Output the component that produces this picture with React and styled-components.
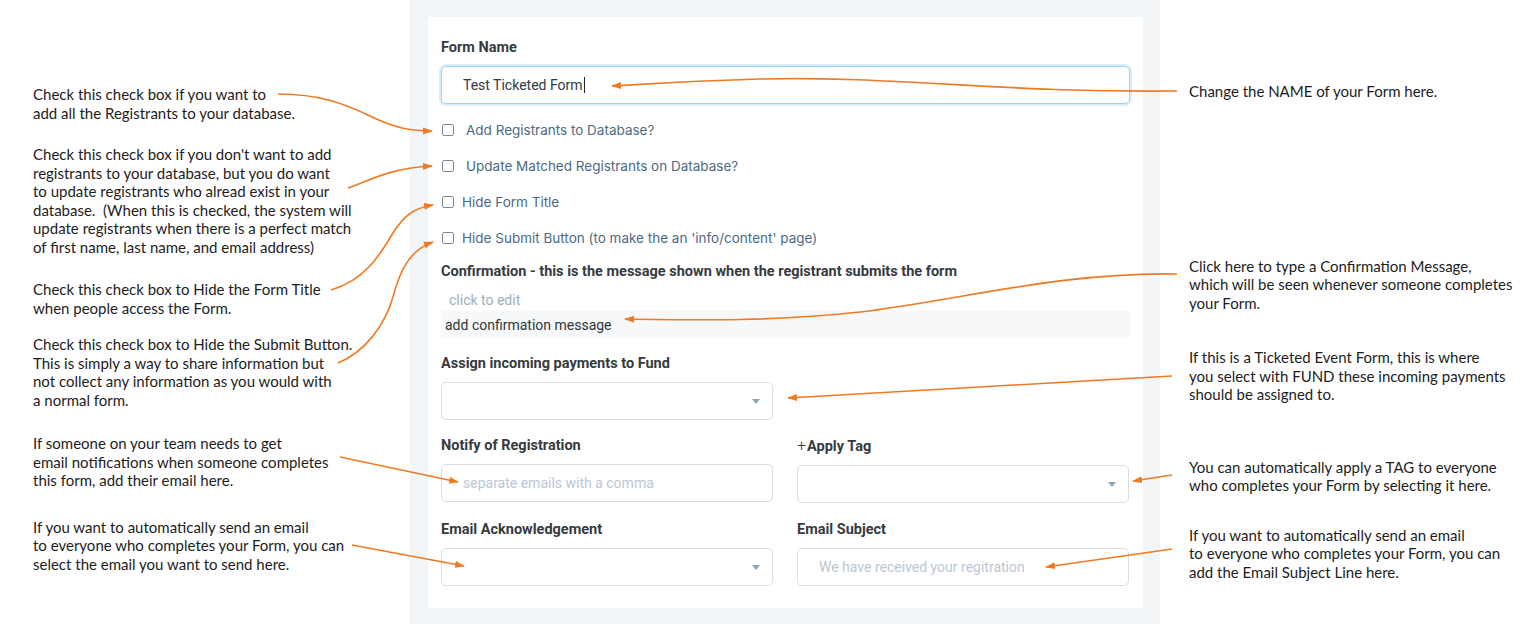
import React from 'react';
import styled, { createGlobalStyle } from 'styled-components';

const GlobalStyle = createGlobalStyle`
  html, body {
    margin: 0;
    padding: 0;
    background: #ffffff;
  }
  body {
    width: 1536px;
    height: 624px;
    overflow: hidden;
  }
`;

const Page = styled.div`
  position: relative;
  display: flex;
  width: 1536px;
  height: 624px;
  font-family: Lato, "Liberation Sans", sans-serif;
`;

const NoteColumn = styled.div`
  flex: none;
  display: flex;
  flex-direction: column;
  width: ${p => p.$width}px;
  padding-left: ${p => p.$inset}px;
  box-sizing: border-box;
`;

const Note = styled.p`
  margin: ${p => p.$top}px 0 0;
  font-size: 15px;
  line-height: 18.5px;
  color: #1d1d1d;
  white-space: pre;
`;

const Panel = styled.div`
  flex: none;
  width: 750px;
  height: 624px;
  padding: 17px 17px 16px 18px;
  box-sizing: border-box;
  background: #f3f6f9;
`;

const Card = styled.div`
  height: 100%;
  padding: 23px 13px 0;
  box-sizing: border-box;
  background: #ffffff;
  font-family: Roboto, "Liberation Sans", sans-serif;
`;

const Label = styled.div`
  margin-top: ${p => p.$top || 0}px;
  font-size: 14.5px;
  font-weight: 700;
  line-height: 16px;
  color: #363b40;

  .plus {
    font-weight: 300;
    font-size: 16px;
    margin-right: 1px;
  }
`;

const Field = styled.div`
  display: flex;
  align-items: center;
  height: 38px;
  margin-top: 10px;
  padding: 0 12px 0 21px;
  box-sizing: border-box;
  border: 1px solid ${p => (p.$focused ? '#9fd1f3' : '#d3dee7')};
  border-radius: 5px;
  box-shadow: ${p => (p.$focused ? '0 0 0 2px #dbeefc' : 'none')};
  font-size: 14px;
  color: ${p => (p.$placeholder ? '#b9c8d4' : '#333a40')};
`;

const Cursor = styled.span`
  display: inline-block;
  width: 1px;
  height: 16px;
  margin-left: 1px;
  background: #222;
`;

const Caret = styled.span`
  margin-left: auto;
  width: 0;
  height: 0;
  border-left: 4px solid transparent;
  border-right: 4px solid transparent;
  border-top: 5px solid #8ea4b6;
`;

const CheckList = styled.div`
  display: flex;
  flex-direction: column;
  margin-top: 8px;
`;

const CheckRow = styled.label`
  display: flex;
  align-items: center;
  height: 36px;
  padding-left: 1px;
  font-family: Inter, "Liberation Sans", sans-serif;
  font-size: 13.5px;
  color: #4d6a82;
`;

const Box = styled.span`
  flex: none;
  width: 12px;
  height: 12px;
  margin-right: ${p => p.$gap}px;
  box-sizing: border-box;
  border: 1.5px solid #7e8a95;
  border-radius: 2px;
`;

const Hint = styled.div`
  margin-top: 12px;
  padding-left: 8px;
  font-size: 14px;
  line-height: 16px;
  color: #9db0bf;
`;

const Message = styled.div`
  display: flex;
  align-items: center;
  height: 27px;
  margin-top: 3px;
  padding-left: 4px;
  background: #f6f8fa;
  font-size: 14px;
  color: #30363b;
`;

const Half = styled.div`
  width: 332px;
`;

const Row = styled.div`
  display: grid;
  grid-template-columns: 332px 332px;
  column-gap: 24px;
  margin-top: ${p => p.$top}px;
`;

const Arrows = styled.svg`
  position: absolute;
  left: 0;
  top: 0;
  pointer-events: none;
`;

const leftNotes = [
  { top: 85, lines: ['Check this check box if you want to', 'add all the Registrants to your database.'] },
  {
    top: 23,
    lines: [
      "Check this check box if you don't want to add",
      'registrants to your database, but you do want',
      'to update registrants who alread exist in your',
      'database.  (When this is checked, the system will',
      'update registrants when there is a perfect match',
      'of first name, last name, and email address)',
    ],
  },
  { top: 24, lines: ['Check this check box to Hide the Form Title', 'when people access the Form.'] },
  {
    top: 18,
    lines: [
      'Check this check box to Hide the Submit Button.',
      'This is simply a way to share information but',
      'not collect any information as you would with',
      'a normal form.',
    ],
  },
  {
    top: 25,
    lines: ['If someone on your team needs to get', 'email notifications when someone completes', 'this form, add their email here.'],
  },
  {
    top: 28,
    lines: ['If you want to automatically send an email', 'to everyone who completes your Form, you can', 'select the email you want to send here.'],
  },
];

const rightNotes = [
  { top: 82, lines: ['Change the NAME of your Form here.'] },
  {
    top: 156,
    lines: ['Click here to type a Confirmation Message,', 'which will be seen whenever someone completes', 'your Form.'],
  },
  {
    top: 36,
    lines: ['If this is a Ticketed Event Form, this is where', 'you select with FUND these incoming payments', 'should be assigned to.'],
  },
  { top: 54, lines: ['You can automatically apply a TAG to everyone', 'who completes your Form by selecting it here.'] },
  {
    top: 31,
    lines: ['If you want to automatically send an email', 'to everyone who completes your Form, you can', 'add the Email Subject Line here.'],
  },
];

const checks = [
  { label: 'Add Registrants to Database?', gap: 12 },
  { label: 'Update Matched Registrants on Database?', gap: 12 },
  { label: 'Hide Form Title', gap: 8 },
  { label: "Hide Submit Button (to make the an 'info/content' page)", gap: 8 },
];

// leader lines from each note to the control it describes
const leaders = [
  'M278,94 C320,94 345,104 370,116 C395,128 410,131 432,131',
  'M348,188 C375,178 392,168 432,166',
  'M331,290 C365,280 380,255 393,233 C405,214 415,208 433,205',
  'M338,363 C365,352 385,325 393,297 C400,270 410,250 433,242',
  'M1177,91 C1000,93 900,76 760,79 C690,81 650,84 612,86',
  'M1177,274 C1060,272 960,300 860,312 C770,322 690,320 625,319',
  'M1172,376 L788,398',
  'M340,457 L458,482',
  'M1172,475 L1133,481',
  'M352,545 L464,566',
  'M1172,549 L1046,567',
];

const NoteText = ({ lines }) =>
  lines.map((line, i) => (
    <React.Fragment key={i}>
      {i > 0 && <br />}
      {line}
    </React.Fragment>
  ));

const App = () => (
  <Page>
    <GlobalStyle />

    <NoteColumn $width={410} $inset={33}>
      {leftNotes.map((n, i) => (
        <Note key={i} $top={n.top}>
          <NoteText lines={n.lines} />
        </Note>
      ))}
    </NoteColumn>

    <Panel>
      <Card>
        <Label>Form Name</Label>
        <Field $focused>
          Test Ticketed Form
          <Cursor />
        </Field>

        <CheckList>
          {checks.map(c => (
            <CheckRow key={c.label}>
              <Box $gap={c.gap} />
              {c.label}
            </CheckRow>
          ))}
        </CheckList>

        <Label $top={8}>Confirmation - this is the message shown when the registrant submits the form</Label>
        <Hint>click to edit</Hint>
        <Message>add confirmation message</Message>

        <Label $top={18}>Assign incoming payments to Fund</Label>
        <Half>
          <Field>
            <Caret />
          </Field>
        </Half>

        <Row $top={18}>
          <div>
            <Label>Notify of Registration</Label>
            <Field $placeholder>separate emails with a comma</Field>
          </div>
          <div>
            <Label>
              <span className="plus">+</span>Apply Tag
            </Label>
            <Field>
              <Caret />
            </Field>
          </div>
        </Row>

        <Row $top={19}>
          <div>
            <Label>Email Acknowledgement</Label>
            <Field>
              <Caret />
            </Field>
          </div>
          <div>
            <Label>Email Subject</Label>
            <Field $placeholder>We have received your regitration</Field>
          </div>
        </Row>
      </Card>
    </Panel>

    <NoteColumn $width={376} $inset={29}>
      {rightNotes.map((n, i) => (
        <Note key={i} $top={n.top}>
          <NoteText lines={n.lines} />
        </Note>
      ))}
    </NoteColumn>

    <Arrows width="1536" height="624" viewBox="0 0 1536 624">
      <defs>
        <marker
          id="head"
          markerUnits="userSpaceOnUse"
          markerWidth="10"
          markerHeight="8"
          refX="9"
          refY="4"
          orient="auto"
        >
          <path d="M0,0.5 L10,4 L0,7.5 z" fill="#ef7a22" />
        </marker>
      </defs>
      {leaders.map((d, i) => (
        <path key={i} d={d} fill="none" stroke="#ef7a22" strokeWidth="1.6" markerEnd="url(#head)" />
      ))}
    </Arrows>
  </Page>
);

export default App;
